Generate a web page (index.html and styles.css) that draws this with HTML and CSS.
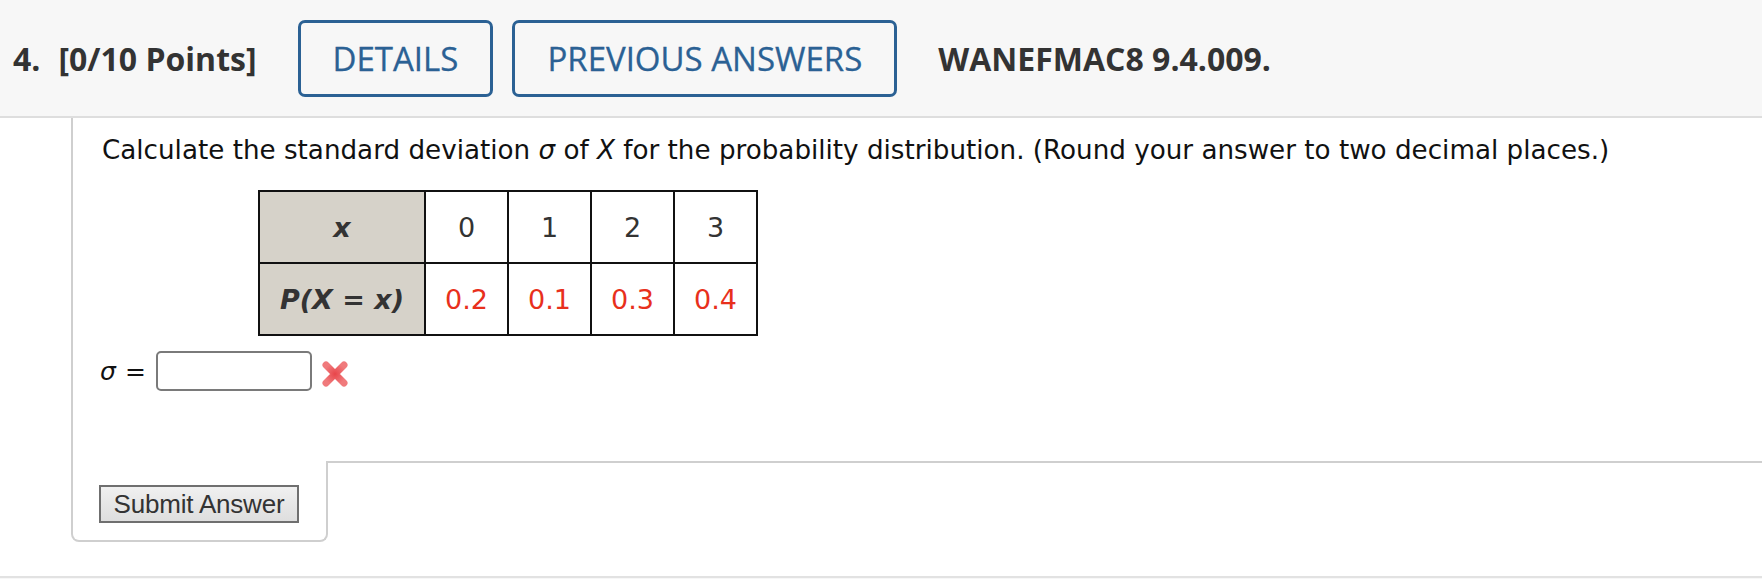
FILE: index.html
```html
<!DOCTYPE html>
<html>
<head>
<meta charset="utf-8">
<link rel="stylesheet" href="styles.css">
</head>
<body>
<div class="header">
  <span class="qnum">4.</span>
  <span class="points">[0/10 Points]</span>
  <span class="btn">DETAILS</span>
  <span class="btn btn2">PREVIOUS ANSWERS</span>
  <span class="code">WANEFMAC8 9.4.009.</span>
</div>
<div class="card">
  <div class="question">
    <p class="prompt">Calculate the standard deviation <i>σ</i> of <i>X</i> for the probability distribution. (Round your answer to two decimal places.)</p>
    <table class="dist">
      <tr><th>x</th><td>0</td><td>1</td><td>2</td><td>3</td></tr>
      <tr><th>P(X = x)</th><td class="p">0.2</td><td class="p">0.1</td><td class="p">0.3</td><td class="p">0.4</td></tr>
    </table>
    <div class="answer">
      <span class="sigma"><i>σ</i></span><span class="eq">=</span>
      <span class="input"></span>
      <svg class="wrong" width="30" height="28" viewBox="0 0 30 28">
        <defs>
          <radialGradient id="g" cx="50%" cy="50%" r="60%">
            <stop offset="0" stop-color="#e8454a"/>
            <stop offset="1" stop-color="#f07a7c"/>
          </radialGradient>
        </defs>
        <path d="M6 5 L24 23 M24 5 L6 23" stroke="url(#g)" stroke-width="7" stroke-linecap="round"/>
      </svg>
    </div>
  </div>
  <div class="footrow">
    <div class="submitbox"><span class="submit">Submit Answer</span></div>
    <div class="rest"></div>
  </div>
</div>
<div class="sep"></div>
</body>
</html>
```
FILE: styles.css
```css
html, body { margin: 0; padding: 0; background: #fff; }
body { width: 1762px; height: 579px; overflow: hidden; font-family: "DejaVu Sans", Verdana, sans-serif; }

.header {
  height: 116px;
  background: #f7f7f7;
  border-bottom: 2px solid #dedede;
  display: flex;
  align-items: center;
  padding-left: 13px;
  font-family: "Open Sans", sans-serif;
  font-size: 32px;
  color: #333;
}
.qnum { font-weight: 700; margin-right: 18px; }
.points { font-weight: 700; margin-right: 41px; }
.btn {
  box-sizing: border-box;
  height: 77px;
  display: flex;
  align-items: center;
  padding: 0 32px;
  border: 3px solid #2b6194;
  border-radius: 7px;
  color: #2b6194;
  font-size: 33px;
  font-weight: 400;
  -webkit-text-stroke: 0.3px #2b6194;
  margin-right: 19px;
}
.btn2 { margin-right: 41px; }
.code { font-weight: 700; }

.card { margin-left: 71px; }
.question {
  border-left: 2px solid #cfcfcf;
  height: 343px;
  padding-left: 29px;
  padding-top: 1px;
  box-sizing: border-box;
}
.prompt {
  margin: 15px 0 0 0;
  font-size: 26.2px;
  line-height: 32px;
  color: #111;
}
.dist {
  border-collapse: collapse;
  margin: 24px 0 0 156px;
  font-size: 27px;
}
.dist th, .dist td {
  border: 2px solid #111;
  height: 70px;
  padding: 0;
  text-align: center;
}
.dist th {
  width: 164px;
  background: #d6d2c9;
  color: #333;
  font-style: italic;
  font-weight: 700;
}
.dist td { width: 81px; color: #333; }
.dist td.p { color: #e8301c; }

.answer {
  display: flex;
  align-items: center;
  margin-top: 15px;
  height: 40px;
}
.sigma { font-size: 25px; width: 25px; margin-left: -2px; color: #111; }
.eq { font-size: 25px; width: 31px; color: #111; }
.input {
  box-sizing: border-box;
  width: 156px;
  height: 40px;
  border: 2px solid #7a7a7a;
  border-radius: 5px;
  background: #fff;
}
.wrong { margin-left: 8px; margin-top: 6px; }

.footrow { display: flex; height: 81px; }
.submitbox {
  box-sizing: border-box;
  width: 257px;
  border-left: 2px solid #cfcfcf;
  border-right: 2px solid #cfcfcf;
  border-bottom: 2px solid #cfcfcf;
  border-radius: 0 0 8px 8px;
  padding: 24px 0 0 26px;
}
.submit {
  box-sizing: border-box;
  display: flex;
  align-items: center;
  justify-content: center;
  width: 200px;
  height: 38px;
  border: 2px solid #6f6f6f;
  background: linear-gradient(#f0f0f0, #dedede);
  font-family: "Liberation Sans", Arial, sans-serif;
  font-size: 26px;
  color: #333;
  letter-spacing: -0.2px;
}
.rest { flex: 1; border-top: 2px solid #cfcfcf; }

.sep {
  margin-top: 34px;
  border-top: 2px solid #e2e2e2;
  height: 10px;
  background: #f7f7f7;
}
```
